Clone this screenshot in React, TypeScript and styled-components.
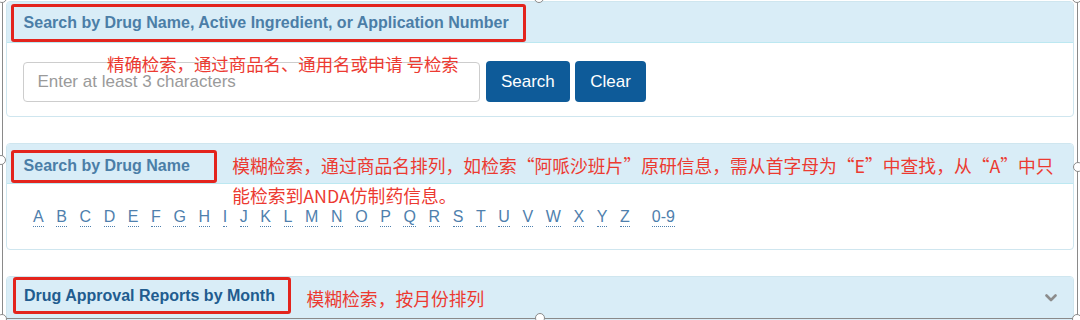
import React from 'react';
import styled, { createGlobalStyle } from 'styled-components';

const GlobalStyle = createGlobalStyle`
  html, body {
    margin: 0;
    padding: 0;
    background: #ffffff;
  }
  body {
    font-family: 'Liberation Sans', Arial, sans-serif;
  }
`;

const Page = styled.div`
  position: relative;
  width: 1080px;
  height: 320px;
  overflow: hidden;
  box-sizing: border-box;
  padding: 1px 6px 0 6px;
  display: flex;
  flex-direction: column;
`;

const Panel = styled.section<{ $gap?: number }>`
  position: relative;
  flex-shrink: 0;
  margin-top: ${(p) => p.$gap ?? 0}px;
  border: 1px solid #cfe6ef;
  border-radius: 4px;
  background: #ffffff;
`;

const Header = styled.div<{ $h: number; $pt: number; $pl: number }>`
  display: flex;
  align-items: flex-start;
  box-sizing: border-box;
  height: ${(p) => p.$h}px;
  padding: ${(p) => p.$pt}px 0 0 ${(p) => p.$pl}px;
  background: #d9edf7;
  border-bottom: 1px solid #bce8f1;
  border-radius: 3px 3px 0 0;
`;

const TitleBox = styled.div<{ $w: number; $h: number; $pl: number }>`
  box-sizing: border-box;
  display: flex;
  align-items: center;
  flex-shrink: 0;
  width: ${(p) => p.$w}px;
  height: ${(p) => p.$h}px;
  padding-left: ${(p) => p.$pl}px;
  border: 3px solid #e3241d;
  border-radius: 3px;
`;

const Title = styled.h2<{ $dark?: boolean }>`
  margin: 0;
  font-size: 16px;
  font-weight: 700;
  white-space: nowrap;
  color: ${(p) => (p.$dark ? '#215c8f' : '#4b7ea7')};
`;

const Note = styled.p<{ $lh: number; $mt?: number; $ml?: number }>`
  margin: ${(p) => p.$mt ?? 0}px 0 0 ${(p) => p.$ml ?? 0}px;
  font-family: 'Noto Sans CJK SC', sans-serif;
  font-size: 17.8px;
  line-height: ${(p) => p.$lh}px;
  color: #ec3a31;
  white-space: nowrap;
`;

const FloatingNote = styled(Note)`
  position: absolute;
  left: 100px;
  top: 9px;
  font-size: 17.4px;
`;

const Body = styled.div<{ $pad: string }>`
  position: relative;
  padding: ${(p) => p.$pad};
`;

const SearchRow = styled.form`
  display: flex;
  align-items: flex-end;
  gap: 5.5px;
  margin: 0;
`;

const SearchInput = styled.input`
  box-sizing: border-box;
  width: 457px;
  height: 40px;
  padding: 0 13px;
  border: 1px solid #cdcdcd;
  border-radius: 4px;
  font-family: inherit;
  font-size: 17px;
  color: #555555;
  outline: none;
  &::placeholder {
    color: #9a9a9a;
  }
`;

const Button = styled.button`
  height: 41px;
  padding: 0 15px;
  border: none;
  border-radius: 4px;
  background: #0e5b99;
  color: #ffffff;
  font-family: inherit;
  font-size: 17px;
`;

const LetterRow = styled.nav`
  display: flex;
  gap: 12.6px;
`;

const Letter = styled.a<{ $extra?: number }>`
  margin-left: ${(p) => p.$extra ?? 0}px;
  font-size: 16px;
  line-height: 18px;
  color: #4f80ad;
  text-decoration: none;
  border-bottom: 1px dotted #4f80ad;
`;

const Chevron = styled.svg`
  flex-shrink: 0;
  margin: 17px 16.5px 0 auto;
`;

const Frame = styled.svg`
  position: absolute;
  left: 0;
  top: 0;
  pointer-events: none;
`;

const letters = 'ABCDEFGHIJKLMNOPQRSTUVWXYZ'.split('');

const handles: [number, number][] = [
  [2, -2],
  [539, -2],
  [1077, -2],
  [1, 160],
  [1078, 167],
  [2, 319],
  [540, 318],
  [1077, 319],
];

export default function App() {
  return (
    <Page>
      <GlobalStyle />

      <Panel>
        <Header $h={41} $pt={1.5} $pl={4}>
          <TitleBox $w={515} $h={38} $pl={9.6}>
            <Title>Search by Drug Name, Active Ingredient, or Application Number</Title>
          </TitleBox>
        </Header>
        <Body $pad="18px 0 14px 16.4px">
          <SearchRow onSubmit={(e) => e.preventDefault()}>
            <SearchInput placeholder="Enter at least 3 characters" />
            <Button type="submit">Search</Button>
            <Button type="button">Clear</Button>
          </SearchRow>
          <FloatingNote $lh={24}>精确检索，通过商品名、通用名或申请 号检索</FloatingNote>
        </Body>
      </Panel>

      <Panel $gap={26}>
        <Header $h={40} $pt={5.5} $pl={4}>
          <TitleBox $w={205.6} $h={33} $pl={9.6}>
            <Title>Search by Drug Name</Title>
          </TitleBox>
          <Note $lh={30} $ml={15.6}>
            模糊检索，通过商品名排列，如检索“阿哌沙班片”原研信息，需从首字母为“E”中查找，从“A”中只
            <br />
            能检索到ANDA仿制药信息。
          </Note>
        </Header>
        <Body $pad="23.5px 0 22.5px 26px">
          <LetterRow>
            {letters.map((l) => (
              <Letter key={l} href="#">
                {l}
              </Letter>
            ))}
            <Letter href="#" $extra={9.4}>
              0-9
            </Letter>
          </LetterRow>
        </Body>
      </Panel>

      <Panel $gap={26}>
        <Header $h={60} $pt={0} $pl={6}>
          <TitleBox $w={278} $h={37} $pl={8}>
            <Title $dark>Drug Approval Reports by Month</Title>
          </TitleBox>
          <Note $lh={24} $mt={8.7} $ml={15.5}>
            模糊检索，按月份排列
          </Note>
          <Chevron width="12" height="8" viewBox="0 0 12 8">
            <path
              d="M1.5 1.5 L6 6 L10.5 1.5"
              fill="none"
              stroke="#8c8c8c"
              strokeWidth="2.6"
              strokeLinecap="round"
              strokeLinejoin="round"
            />
          </Chevron>
        </Header>
      </Panel>

      <Frame width="1080" height="320" viewBox="0 0 1080 320">
        <path d="M2.5 0 V318.5 H1077.5 V0" fill="none" stroke="#8a8a8a" strokeWidth="1" />
        {handles.map(([x, y]) => (
          <circle key={`${x}-${y}`} cx={x} cy={y} r={4.5} fill="#ffffff" stroke="#8a8a8a" strokeWidth="1" />
        ))}
      </Frame>
    </Page>
  );
}
